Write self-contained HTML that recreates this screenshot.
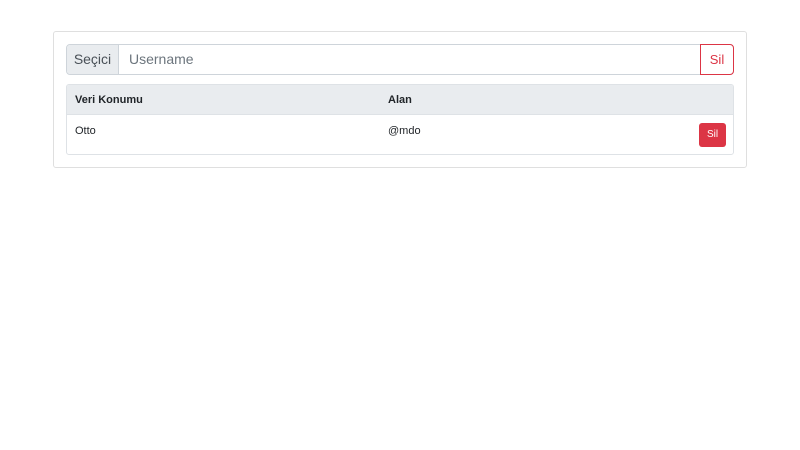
<!DOCTYPE html>
<html><head><style>
*{box-sizing:border-box;margin:0;padding:0}
body{width:800px;height:450px;background:#fff;font-family:"Liberation Sans",sans-serif;color:#212529;position:relative}
.card{position:absolute;left:53px;top:31px;width:694px;height:137px;border:1px solid #dfdfdf;border-radius:3px}
.ig{position:absolute;left:66px;top:44px;width:668px;height:31px;border:1px solid #ced4da;border-radius:4px;overflow:hidden}
.addon{position:absolute;left:0;top:0;width:52px;height:29px;background:#e9ecef;border-right:1px solid #ced4da;font-size:14px;line-height:29px;text-align:center;color:#495057}
.ph{position:absolute;left:62px;top:0;line-height:29px;font-size:14px;color:#6c757d}
.btn1{position:absolute;left:700px;top:44px;width:34px;height:31px;border:1px solid #dc3545;border-radius:0 4px 4px 0;color:#dc3545;font-size:13px;line-height:29px;text-align:center;background:#fff}
.tbl{position:absolute;left:66px;top:84px;width:668px;height:71px;border:1px solid #dee2e6;border-radius:3px;overflow:hidden;font-size:11px}
.th{position:absolute;left:0;top:0;width:100%;height:30px;background:#e9ecef;border-bottom:1px solid #dee2e6;font-weight:bold}
.t{position:absolute}
.btn2{position:absolute;left:699px;top:123px;width:27px;height:24px;background:#dc3545;border-radius:3px;color:#fff;font-size:10px;line-height:24px;text-align:center}
</style></head><body>
<div class="card"></div>
<div class="ig"><div class="addon">Seçici</div><div class="ph">Username</div></div>
<div class="btn1">Sil</div>
<div class="tbl"><div class="th"><span class="t" style="left:8px;top:9px">Veri Konumu</span><span class="t" style="left:321px;top:9px">Alan</span></div>
<span class="t" style="left:8px;top:40px">Otto</span><span class="t" style="left:321px;top:40px">@mdo</span></div>
<div class="btn2">Sil</div>
</body></html>
